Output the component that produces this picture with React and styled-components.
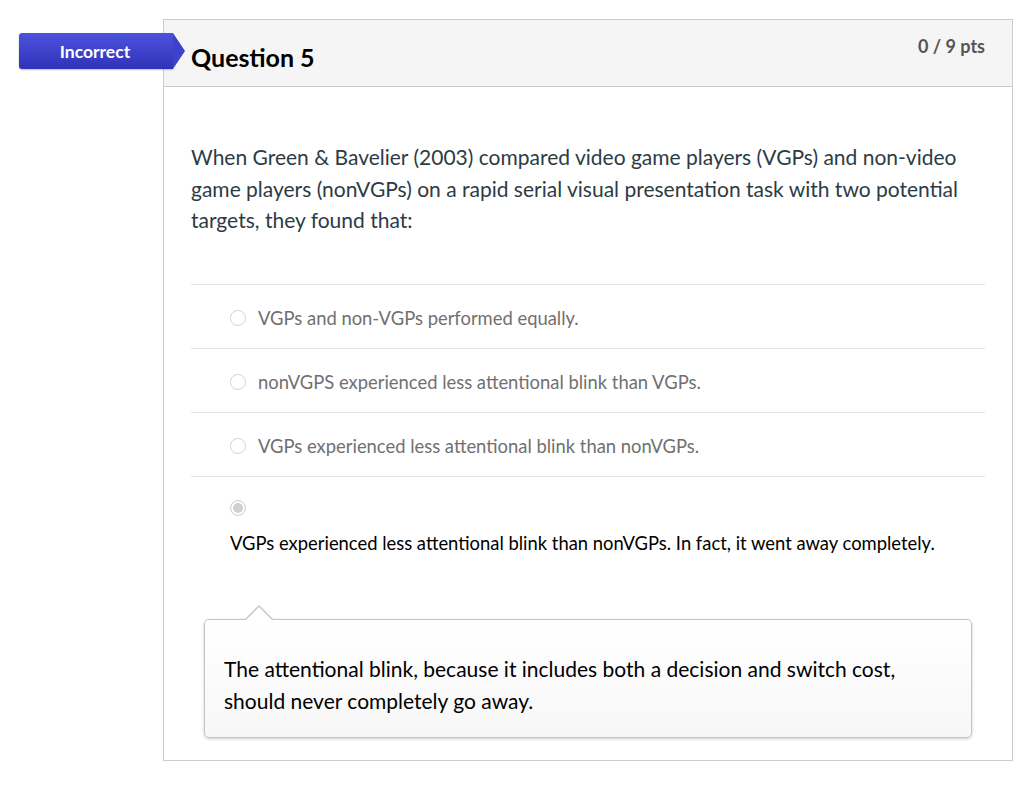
import React from 'react';
import styled, { createGlobalStyle } from 'styled-components';

const GlobalStyle = createGlobalStyle`
	body {
		margin: 0;
		background: #fff;
		font-family: Lato, 'Open Sans', sans-serif;
		color: #2d3b45;
	}
`;

const answers = [
	{ text: 'VGPs and non-VGPs performed equally.' },
	{ text: 'nonVGPS experienced less attentional blink than VGPs.' },
	{ text: 'VGPs experienced less attentional blink than nonVGPs.' },
	{
		text: 'VGPs experienced less attentional blink than nonVGPs. In fact, it went away completely.',
		selected: true,
	},
];

export default function App() {
	return (
		<>
			<GlobalStyle />
			<Page>
				<Card>
					<Badge>Incorrect</Badge>
					<Header>
						<Title>Question 5</Title>
						<Points>0 / 9 pts</Points>
					</Header>
					<Body>
						<Prompt>
							When Green &amp; Bavelier (2003) compared video game players (VGPs) and
							non-video game players (nonVGPs) on a rapid serial visual presentation
							task with two potential targets, they found that:
						</Prompt>
						<Answers>
							{answers.map((a) => (
								<Answer key={a.text} $selected={a.selected}>
									<Radio $selected={a.selected} />
									<AnswerText $selected={a.selected}>{a.text}</AnswerText>
								</Answer>
							))}
						</Answers>
						<Feedback>
							The attentional blink, because it includes both a decision and switch
							cost, should never completely go away.
						</Feedback>
					</Body>
				</Card>
			</Page>
		</>
	);
}

const Page = styled.div`
	padding: 19px 0 28px 163px;
`;

const Card = styled.section`
	position: relative;
	width: 848px;
	border: 1px solid #c7cdd1;
	background: #fff;
`;

const Badge = styled.div`
	position: absolute;
	left: -145px;
	top: 13px;
	width: 154px;
	height: 36px;
	box-sizing: border-box;
	padding-right: 2px;
	display: flex;
	align-items: center;
	justify-content: center;
	background: linear-gradient(#4d52de, #2f33b8);
	border-radius: 3px 0 0 3px;
	box-shadow: 0 1px 2px rgba(0, 0, 0, 0.25);
	color: #fff;
	font-size: 17.5px;
	font-weight: 700;

	&::after {
		content: '';
		position: absolute;
		right: -12px;
		top: 0;
		border-top: 18px solid transparent;
		border-bottom: 18px solid transparent;
		border-left: 12px solid #3d41cb;
	}
`;

const Header = styled.header`
	height: 67px;
	box-sizing: border-box;
	padding: 0 27px 0 27px;
	display: flex;
	justify-content: space-between;
	align-items: flex-start;
	background: #f5f5f5;
	border-bottom: 1px solid #c7cdd1;
`;

const Title = styled.h2`
	margin: 20px 0 0;
	font-size: 25px;
	font-weight: 700;
	line-height: 34px;
	color: #000;
`;

const Points = styled.div`
	margin-top: 15px;
	font-size: 18px;
	font-weight: 700;
	color: #555;
`;

const Body = styled.div`
	padding: 54px 27px 22px;
`;

const Prompt = styled.p`
	margin: 0 0 48px;
	font-size: 21px;
	line-height: 31.5px;
	color: #2d3b45;
`;

const Answers = styled.div``;

const Answer = styled.div`
	border-top: 1px solid #e4e4e4;
	display: flex;
	flex-direction: ${(p) => (p.$selected ? 'column' : 'row')};
	align-items: ${(p) => (p.$selected ? 'flex-start' : 'center')};
	gap: ${(p) => (p.$selected ? '15px' : '12px')};
	padding: ${(p) => (p.$selected ? '23px 0 0 39px' : '4px 0 0 39px')};
	height: ${(p) => (p.$selected ? 'auto' : '64px')};
	box-sizing: border-box;
`;

const Radio = styled.span`
	width: 16px;
	height: 16px;
	box-sizing: border-box;
	border-radius: 50%;
	border: 1px solid #d5d5d5;
	background: ${(p) => (p.$selected ? '#d0d0d0' : '#fff')};
	box-shadow: ${(p) => (p.$selected ? 'inset 0 0 0 2px #fff' : 'none')};
	flex-shrink: 0;
`;

const AnswerText = styled.span`
	font-size: 18.4px;
	line-height: 24px;
	color: ${(p) => (p.$selected ? '#000' : '#707070')};
`;

const Feedback = styled.div`
	position: relative;
	margin: 64px 13px 0;
	padding: 33px 19px 20px;
	border: 1px solid #c4c4c4;
	border-radius: 5px;
	background: linear-gradient(#fff, #f7f7f7);
	box-shadow: 0 1px 3px rgba(0, 0, 0, 0.2);
	font-size: 21px;
	line-height: 32px;
	color: #000;

	&::before,
	&::after {
		content: '';
		position: absolute;
		left: 40px;
		border-left: 14px solid transparent;
		border-right: 14px solid transparent;
	}

	&::before {
		top: -15px;
		border-bottom: 14px solid #c4c4c4;
	}

	&::after {
		top: -13px;
		border-bottom: 13px solid #fff;
		left: 41px;
		border-left-width: 13px;
		border-right-width: 13px;
	}
`;
